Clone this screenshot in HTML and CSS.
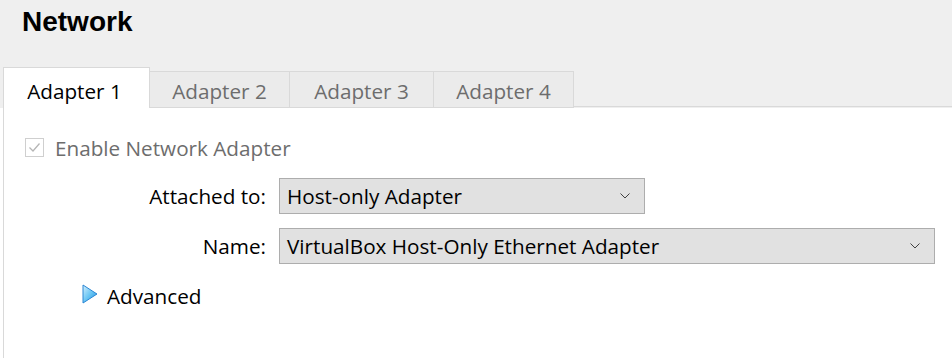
FILE: index.html
```html
<!DOCTYPE html>
<html>
<head>
<meta charset="utf-8">
<link rel="stylesheet" href="styles.css">
</head>
<body>
<div class="header">
  <h1 class="title">Network</h1>
</div>
<div class="tabbar">
  <div class="tab active">Adapter 1</div>
  <div class="tab t2">Adapter 2</div>
  <div class="tab t3">Adapter 3</div>
  <div class="tab t4">Adapter 4</div>
  <div class="tabfill"></div>
</div>
<div class="panel">
  <div class="check-row">
    <span class="checkbox">
      <svg width="19" height="19" viewBox="0 0 19 19"><path d="M4.5 9.5 L8 13 L14.5 5.5" fill="none" stroke="#b5b5b5" stroke-width="1.3"/></svg>
    </span>
    <span class="check-label">Enable Network Adapter</span>
  </div>
  <div class="form">
    <div class="label">Attached to:</div>
    <div class="combo c1"><span>Host-only Adapter</span>
      <svg class="chev" width="12" height="8" viewBox="0 0 12 8"><path d="M1.5 1.5 L6 6 L10.5 1.5" fill="none" stroke="#404040" stroke-width="1"/></svg>
    </div>
    <div class="label">Name:</div>
    <div class="combo c2"><span>VirtualBox Host-Only Ethernet Adapter</span>
      <svg class="chev" width="12" height="8" viewBox="0 0 12 8"><path d="M1.5 1.5 L6 6 L10.5 1.5" fill="none" stroke="#404040" stroke-width="1"/></svg>
    </div>
  </div>
  <div class="adv-row">
    <svg class="tri" width="16" height="20" viewBox="0 0 16 20">
      <defs>
        <linearGradient id="g" x1="0" y1="0" x2="1" y2="1">
          <stop offset="0" stop-color="#d4effd"/>
          <stop offset="0.5" stop-color="#6ac6f4"/>
          <stop offset="1" stop-color="#1f90dc"/>
        </linearGradient>
      </defs>
      <path d="M1 1 L15 10 L1 19 Z" fill="url(#g)" stroke="#2a86d4" stroke-width="1" stroke-linejoin="round"/>
    </svg>
    <span class="adv-label">Advanced</span>
  </div>
</div>
</body>
</html>
```

FILE: styles.css
```css
html, body {
  margin: 0;
  padding: 0;
  width: 952px;
  height: 358px;
  overflow: hidden;
  background: #ffffff;
  font-family: "Open Sans", "Noto Sans", sans-serif;
  color: #000;
}

.header {
  background: #efefef;
  height: 67px;
  box-sizing: border-box;
  padding: 2px 0 0 22px;
}

.title {
  margin: 0;
  font-family: "Liberation Sans", Arial, sans-serif;
  font-weight: bold;
  font-size: 28px;
  line-height: 40px;
}

.tabbar {
  display: flex;
  align-items: flex-end;
  background: #efefef;
  height: 41px;
  padding-left: 3px;
}

.tab {
  box-sizing: border-box;
  height: 37px;
  border: 1px solid #d9d9d9;
  border-left: none;
  background: #ebebeb;
  color: #6d6d6d;
  font-size: 20.7px;
  line-height: 38px;
  text-align: center;
}

.tab.active {
  width: 147px;
  height: 41px;
  background: #fff;
  color: #000;
  border-left: 1px solid #d9d9d9;
  border-bottom: none;
  line-height: 46px;
  padding-right: 4px;
}

.t2 { width: 140px; }
.t3 { width: 144px; }
.t4 { width: 140px; }

.tabfill {
  flex: 1;
  height: 1px;
  margin-bottom: 1px;
  background: #d9d9d9;
}

.panel {
  margin-left: 3px;
  border-left: 1px solid #d9d9d9;
  height: 250px;
  box-sizing: border-box;
  padding-top: 30px;
}

.check-row {
  display: flex;
  align-items: center;
  padding-left: 21px;
  height: 19px;
}

.checkbox {
  width: 19px;
  height: 19px;
  box-sizing: border-box;
  border: 1px solid #cfcfcf;
  background: #fff;
  display: flex;
}
.checkbox svg {
  margin: -1px;
}

.check-label {
  margin-left: 11px;
  font-size: 20.7px;
  color: #6d6d6d;
}

.form {
  display: grid;
  grid-template-columns: 262px auto;
  column-gap: 13px;
  row-gap: 14px;
  margin-top: 21px;
  justify-items: start;
  align-items: center;
}

.label {
  justify-self: end;
  font-size: 20.7px;
}

.combo {
  box-sizing: border-box;
  height: 36px;
  border: 1px solid #adadad;
  background: #e1e1e1;
  display: flex;
  align-items: center;
  justify-content: space-between;
  padding: 0 13px 0 7px;
  font-size: 20.7px;
}

.c1 { width: 366px; }
.c2 { width: 656px; }

.chev {
  display: block;
}

.adv-row {
  display: flex;
  align-items: center;
  margin-top: 18px;
  padding-left: 78px;
}

.tri {
  display: block;
  margin-bottom: 5px;
}

.adv-label {
  margin-left: 9px;
  font-size: 20.7px;
}
```
